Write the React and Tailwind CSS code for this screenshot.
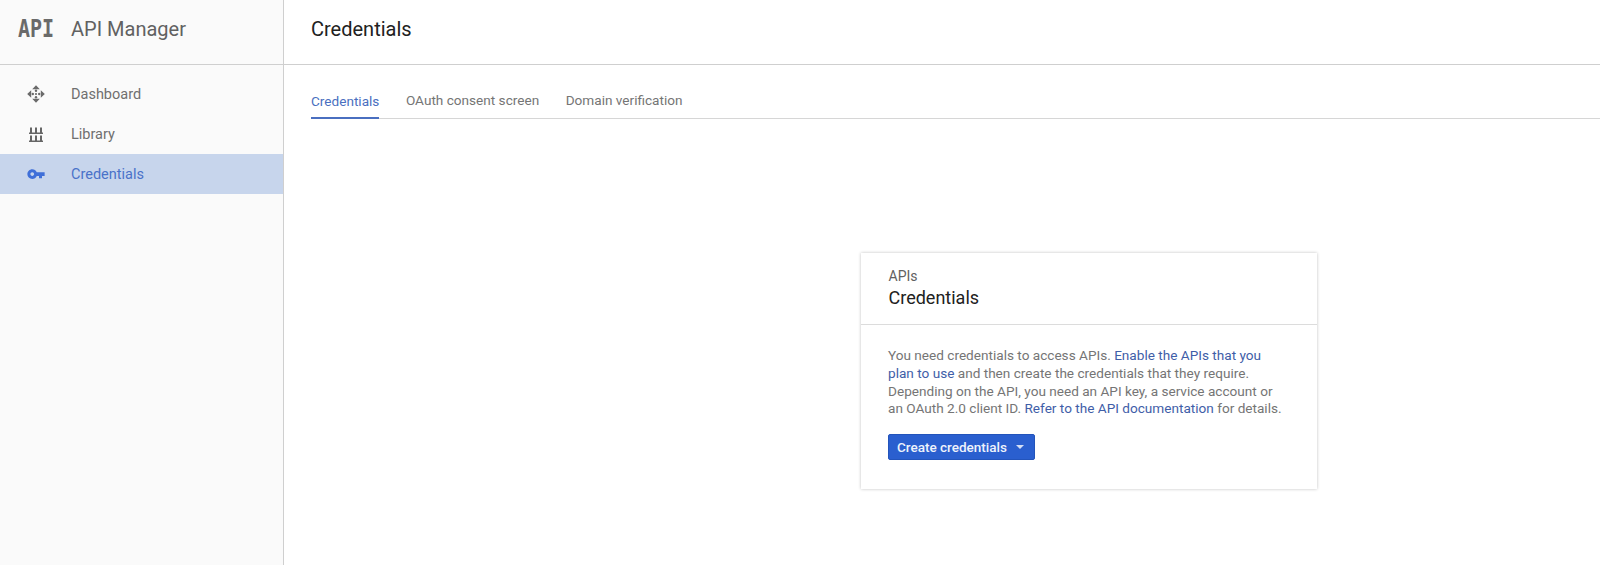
import React from 'react';

const DashboardIcon = () => (
  <svg width="18" height="18" viewBox="0 0 18 18" className="text-[#6a6a6a]" fill="currentColor">
    <path d="M9 0.200l3.800 4H5.200zM9 17.800l-3.800-4h7.600zM0.200 9l4-3.800v7.600zM17.800 9l-4 3.800V5.200z" />
    <circle cx="9" cy="5.800" r="1.200" />
    <circle cx="9" cy="12.200" r="1.200" />
    <circle cx="5.800" cy="9" r="1.200" />
    <circle cx="12.200" cy="9" r="1.200" />
    <circle cx="9" cy="9" r="1.100" />
  </svg>
);

const LibraryIcon = () => (
  <svg width="14" height="15" viewBox="0 0 14 15" className="text-[#666666]" fill="currentColor">
    <path d="M1 0.500h2v5H1zM6 0.500h2v5H6zM11 0.500h2v5h-2zM0 5.500h14V7H0zM1 8.500h2v5H1zM6 8.500h2v5H6zM11 8.500h2v5h-2zM0 13.500h14V15H0z" />
  </svg>
);

const KeyIcon = () => (
  <svg width="18" height="18" viewBox="0 0 24 24" className="text-[#3f6fd8]" fill="currentColor">
    <path d="M13 9.500C12 7.200 9.700 5.500 7 5.500c-3.600 0-6.500 2.900-6.500 6.500s2.900 6.500 6.500 6.500c2.700 0 5-1.700 6-4h3v3h4v-3h3.500v-5H13zM7 14.500c-1.400 0-2.500-1.100-2.500-2.500S5.600 9.500 7 9.500s2.500 1.100 2.500 2.500-1.100 2.500-2.500 2.500z" />
  </svg>
);

const NavItem = ({ icon, label, active }) => (
  <div className={`flex items-center h-10 ${active ? 'bg-[#c7d5ec] text-[#4a72c9]' : 'text-[#6f6f6f]'}`}>
    <div className="w-[71px] flex justify-center pl-[1px]">{icon}</div>
    <span className="text-[14.500px] pt-[1px]">{label}</span>
  </div>
);

const App = () => {
  return (
    <div className="flex h-[565px] w-full bg-white font-['Roboto',sans-serif] overflow-hidden">
      <aside className="w-[284px] shrink-0 bg-[#fafafa] border-r border-[#cfcfcf]">
        <div className="h-[65px] flex items-center pb-[6px] border-b border-[#cfcfcf]">
          <div className="w-[71px] pl-[18px] pt-[3px]">
            <span className="inline-block origin-center scale-y-[1.2] font-['DejaVu_Sans_Mono',monospace] font-bold text-[20px] text-[#6a6a6a] leading-none">API</span>
          </div>
          <span className="text-[20px] text-[#616161]">API Manager</span>
        </div>
        <nav className="pt-[9px]">
          <NavItem icon={<DashboardIcon />} label="Dashboard" />
          <NavItem icon={<LibraryIcon />} label="Library" />
          <NavItem icon={<KeyIcon />} label="Credentials" active />
        </nav>
      </aside>

      <main className="flex-1 min-w-0">
        <header className="h-[65px] flex items-center pl-[27px] pb-[6px] border-b border-[#cfcfcf]">
          <h1 className="text-[20px] text-[#212121]">Credentials</h1>
        </header>

        <div className="h-[54px] ml-[27px] flex items-end gap-[26.500px] border-b border-[#d6d6d6]">
          <div className="h-[28px] border-b-2 border-[#4a6fc0] -mb-px text-[13.600px] text-[#4a6fc0]">Credentials</div>
          <div className="h-[28px] text-[13.600px] text-[#757575]">OAuth consent screen</div>
          <div className="h-[28px] text-[13.600px] text-[#757575]">Domain verification</div>
        </div>

        <section className="mt-[134px] ml-[577px] w-[456px] h-[236px] bg-white shadow-[0_0_3px_rgba(0,0,0,0.25)]">
          <div className="h-[72px] pl-[27.500px] pt-[15px] border-b border-[#dcdcdc]">
            <p className="text-[14px] leading-4 text-[#616161]">APIs</p>
            <h2 className="mt-[2px] text-[18px] leading-[24px] text-[#212121]">Credentials</h2>
          </div>
          <div className="pl-[27px] pr-[29px] pt-[22px]">
            <p className="text-[13.600px] leading-[17.800px] text-[#757575]">
              You need credentials to access APIs. <span className="text-[#3f5ea8]">Enable the APIs that you plan to use</span> and then create the credentials that they require. Depending on the API, you need an API key, a service account or an OAuth 2.0 client ID. <span className="text-[#3f5ea8]">Refer to the API documentation</span> for details.
            </p>
            <button className="mt-[16px] w-[147px] h-[26px] flex items-center pl-[8px] rounded-[2px] bg-[#2a5fcf] border border-[#2354bb] text-[#eef3fc] text-[13.500px] font-medium">
              Create credentials
              <span className="ml-[9px] w-0 h-0 border-x-[4px] border-x-transparent border-t-[4px] border-t-white/80" />
            </button>
          </div>
        </section>
      </main>
    </div>
  );
};

export default App;
